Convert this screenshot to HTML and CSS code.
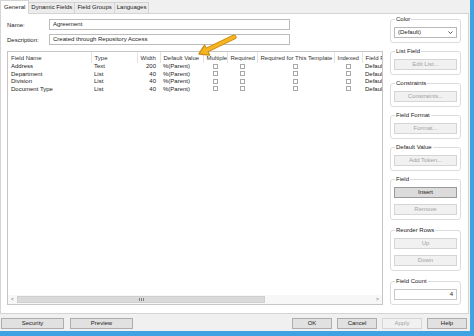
FILE: index.html
```html
<!DOCTYPE html>
<html lang="en">
<head>
    <meta charset="UTF-8">
    <meta name="viewport" content="width=device-width, initial-scale=1.0">
    <title>Template Properties</title>
    <link rel="stylesheet" href="styles.css">
</head>
<body>
    <div class="dialog">
        <div class="tabs">
            <div class="tab active">General</div>
            <div class="tab">Dynamic Fields</div>
            <div class="tab">Field Groups</div>
            <div class="tab">Languages</div>
        </div>

        <div class="panel">
            <div class="main">
                <div class="form-row">
                    <label>Name:</label>
                    <div class="textbox">Agreement</div>
                </div>
                <div class="form-row">
                    <label>Description:</label>
                    <div class="textbox">Created through Repository Access</div>
                </div>

                <div class="list">
                    <div class="list-body">
                        <table class="fields">
                            <colgroup>
                                <col class="c-name">
                                <col class="c-type">
                                <col class="c-width">
                                <col class="c-default">
                                <col class="c-multiple">
                                <col class="c-required">
                                <col class="c-template">
                                <col class="c-indexed">
                                <col class="c-format">
                            </colgroup>
                            <thead>
                                <tr>
                                    <th>Field Name</th>
                                    <th>Type</th>
                                    <th class="num">Width</th>
                                    <th>Default Value</th>
                                    <th>Multiple</th>
                                    <th>Required</th>
                                    <th>Required for This Template</th>
                                    <th>Indexed</th>
                                    <th>Field Format</th>
                                </tr>
                            </thead>
                            <tbody>
                                <tr>
                                    <td>Address</td>
                                    <td>Text</td>
                                    <td class="num">200</td>
                                    <td>%(Parent)</td>
                                    <td class="check"><span class="box"></span></td>
                                    <td class="check"><span class="box"></span></td>
                                    <td class="check"><span class="box"></span></td>
                                    <td class="check"><span class="box"></span></td>
                                    <td>Default</td>
                                </tr>
                                <tr>
                                    <td>Department</td>
                                    <td>List</td>
                                    <td class="num">40</td>
                                    <td>%(Parent)</td>
                                    <td class="check"><span class="box"></span></td>
                                    <td class="check"><span class="box"></span></td>
                                    <td class="check"><span class="box"></span></td>
                                    <td class="check"><span class="box"></span></td>
                                    <td>Default</td>
                                </tr>
                                <tr>
                                    <td>Division</td>
                                    <td>List</td>
                                    <td class="num">40</td>
                                    <td>%(Parent)</td>
                                    <td class="check"><span class="box"></span></td>
                                    <td class="check"><span class="box"></span></td>
                                    <td class="check"><span class="box"></span></td>
                                    <td class="check"><span class="box"></span></td>
                                    <td>Default</td>
                                </tr>
                                <tr>
                                    <td>Document Type</td>
                                    <td>List</td>
                                    <td class="num">40</td>
                                    <td>%(Parent)</td>
                                    <td class="check"><span class="box"></span></td>
                                    <td class="check"><span class="box"></span></td>
                                    <td class="check"><span class="box"></span></td>
                                    <td class="check"><span class="box"></span></td>
                                    <td>Default</td>
                                </tr>
                            </tbody>
                        </table>
                    </div>
                    <div class="hscroll">
                        <div class="sb-arrow">&lt;</div>
                        <div class="sb-thumb"><span class="grip"></span></div>
                        <div class="sb-track"></div>
                        <div class="sb-arrow">&gt;</div>
                    </div>
                </div>
            </div>

            <div class="side">
                <div class="group">
                    <div class="group-title">Color</div>
                    <div class="select">
                        <span>(Default)</span>
                        <svg width="5" height="3" viewBox="0 0 5 3"><polyline points="0.5,0.5 2.5,2.5 4.5,0.5" fill="none" stroke="#444" stroke-width="0.9"/></svg>
                    </div>
                </div>
                <div class="group">
                    <div class="group-title">List Field</div>
                    <div class="btn disabled">Edit List...</div>
                </div>
                <div class="group">
                    <div class="group-title">Constraints</div>
                    <div class="btn disabled">Constraints...</div>
                </div>
                <div class="group">
                    <div class="group-title">Field Format</div>
                    <div class="btn disabled">Format...</div>
                </div>
                <div class="group">
                    <div class="group-title">Default Value</div>
                    <div class="btn disabled">Add Token...</div>
                </div>
                <div class="group spaced">
                    <div class="group-title">Field</div>
                    <div class="btn focus">Insert</div>
                    <div class="btn disabled">Remove</div>
                </div>
                <div class="group spaced">
                    <div class="group-title">Reorder Rows</div>
                    <div class="btn disabled">Up</div>
                    <div class="btn disabled">Down</div>
                </div>
                <div class="group">
                    <div class="group-title">Field Count</div>
                    <div class="spin">4</div>
                </div>
            </div>
        </div>

        <div class="footer">
            <div class="btn wide">Security</div>
            <div class="btn wide">Preview</div>
            <div class="footer-right">
                <div class="btn">OK</div>
                <div class="btn">Cancel</div>
                <div class="btn disabled">Apply</div>
                <div class="btn">Help</div>
            </div>
        </div>

        <!-- callout arrow pointing at the Multiple column -->
        <svg class="callout" width="50" height="30" viewBox="0 0 50 30">
            <line x1="44" y1="7" x2="17" y2="20" stroke="#c98a12" stroke-width="5" stroke-linecap="round"/>
            <polygon points="9,24 19.6,25 14.6,15.2" fill="#c98a12" stroke="#c98a12" stroke-width="1.4" stroke-linejoin="round"/>
            <line x1="44" y1="7" x2="17" y2="20" stroke="#f5b521" stroke-width="3.4" stroke-linecap="round"/>
            <polygon points="9.8,23.6 18.9,24.4 14.9,16" fill="#f5b521"/>
        </svg>
    </div>
</body>
</html>
```

FILE: styles.css
```css
body {
    margin: 0;
    width: 474px;
    height: 336px;
    overflow: hidden;
    background: #3fa2e2;
    font-family: "Liberation Sans", Arial, sans-serif;
    font-size: 6px;
    color: #222;
}

.dialog {
    position: relative;
    width: 470px;
    height: 331px;
    background: #f0f0f0;
    display: flex;
    flex-direction: column;
}

/* tabs */
.tabs {
    display: flex;
    align-items: flex-end;
    height: 13px;
}

.tab {
    height: 10px;
    line-height: 9px;
    padding: 0 2px;
    border: 1px solid #d4d4d4;
    border-bottom: none;
    margin-right: -1px;
    background: #ececec;
    white-space: nowrap;
}

.tab.active {
    height: 13px;
    line-height: 12px;
    padding: 0 3px;
    margin-bottom: -1px;
    background: #fff;
    position: relative;
    z-index: 1;
}

/* tab page */
.panel {
    display: flex;
    width: 469px;
    height: 301px;
    box-sizing: border-box;
    background: #fff;
    border: 1px solid #d4d4d4;
}

.main {
    width: 376px;
    padding: 5px 0 0 6px;
    display: flex;
    flex-direction: column;
}

.form-row {
    display: flex;
    align-items: center;
    height: 11px;
    margin-bottom: 4px;
}

.form-row label {
    width: 42px;
}

.textbox {
    width: 241px;
    height: 11px;
    box-sizing: border-box;
    padding: 0 3px;
    line-height: 9px;
    border: 1px solid #bcbcbc;
    background: #fff;
}

/* list view */
.list {
    flex: 1;
    margin: 2px 0 8px;
    display: flex;
    flex-direction: column;
    border: 1px solid #c6c6c6;
    min-height: 0;
}

.list-body {
    flex: 1;
    overflow: hidden;
}

.fields {
    border-collapse: collapse;
    table-layout: fixed;
    width: 424px;
}

.c-name { width: 83px; }
.c-type { width: 46px; }
.c-width { width: 23px; }
.c-default { width: 43px; }
.c-multiple { width: 24px; }
.c-required { width: 30px; }
.c-template { width: 77px; }
.c-indexed { width: 28px; }
.c-format { width: 70px; }

.fields th {
    height: 11px;
    padding: 0 3px;
    font-weight: normal;
    text-align: left;
    color: #333;
    border-right: 1px solid #e3e3e3;
    white-space: nowrap;
    overflow: hidden;
}

.fields td {
    height: 7.5px;
    line-height: 7.5px;
    padding: 0 3px;
    white-space: nowrap;
    overflow: hidden;
}

.fields .num {
    text-align: right;
    padding-right: 4px;
}

.fields .check {
    text-align: center;
    padding: 0;
}

.box {
    display: inline-block;
    width: 3px;
    height: 3px;
    border: 1px solid #a8a8a8;
    background: #fff;
    vertical-align: middle;
}

.hscroll {
    display: flex;
    height: 9px;
    background: #f7f7f7;
}

.sb-arrow {
    width: 9px;
    line-height: 9px;
    text-align: center;
    font-size: 5px;
    color: #606060;
}

.sb-thumb {
    width: 248px;
    margin: 1px 0;
    background: #dadada;
    border: 1px solid #cfcfcf;
    box-sizing: border-box;
    display: flex;
    align-items: center;
    justify-content: center;
}

.grip {
    width: 5px;
    height: 3px;
    background: repeating-linear-gradient(90deg, #808080 0 1px, transparent 1px 2px);
}

.sb-track {
    flex: 1;
}

/* right column */
.side {
    width: 71px;
    margin-left: 7px;
    padding-top: 5px;
}

.group {
    border: 1px solid #dcdcdc;
    border-radius: 3px;
    padding: 0 3px 4px;
    margin-bottom: 8px;
}

.group.spaced {
    margin-bottom: 10px;
}

.group-title {
    width: fit-content;
    margin: -4px 0 0 1px;
    padding: 0 1px;
    line-height: 7px;
    background: #fff;
}

.select,
.spin {
    height: 11px;
    box-sizing: border-box;
    margin-top: 4px;
    border: 1px solid #b8b8b8;
    background: #fff;
    padding: 0 3px;
    line-height: 9px;
}

.select {
    display: flex;
    justify-content: space-between;
    align-items: center;
}

.spin {
    text-align: right;
    border-color: #c8c8c8;
}

.btn {
    height: 11px;
    box-sizing: border-box;
    margin-top: 4px;
    line-height: 9px;
    text-align: center;
    border: 1px solid #adadad;
    background: #e1e1e1;
    white-space: nowrap;
}

.btn + .btn {
    margin-top: 6px;
}

.btn.focus {
    background: #dcdcdc;
    border-color: #9a9a9a;
}

.btn.disabled {
    color: #a3a3a3;
    background: #f1f1f1;
    border-color: #d5d5d5;
}

/* bottom buttons */
.footer {
    display: flex;
    gap: 6px;
    padding: 4px 3px 0 1px;
}

.footer .btn {
    width: 40px;
    margin-top: 0;
}

.footer .btn.wide {
    width: 63px;
}

.footer-right {
    display: flex;
    gap: 5px;
    margin-left: auto;
}

.callout {
    position: absolute;
    left: 190px;
    top: 30px;
}
```
